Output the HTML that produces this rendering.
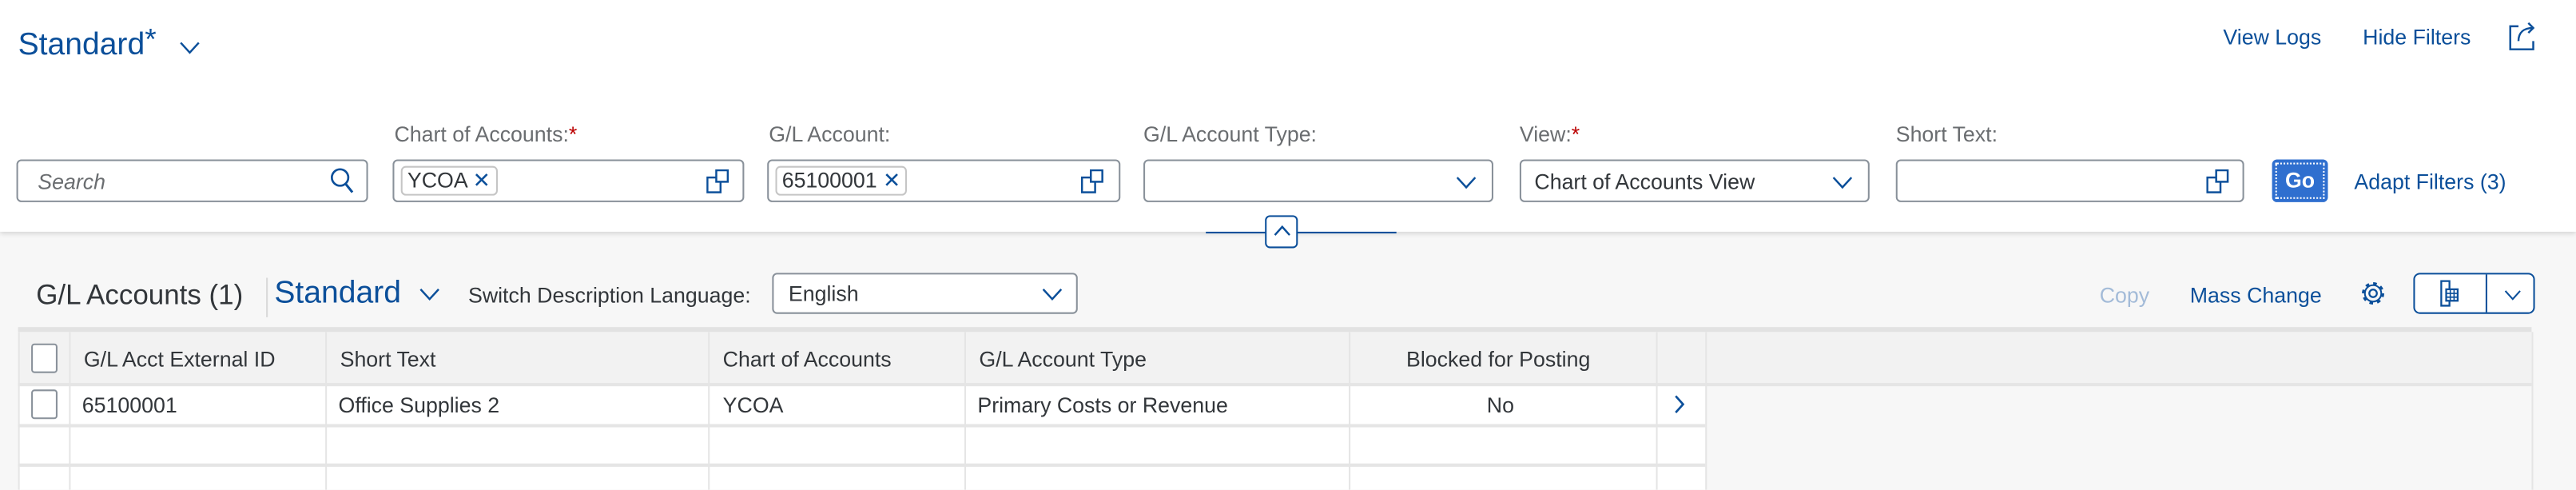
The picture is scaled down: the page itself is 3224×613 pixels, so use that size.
<!DOCTYPE html>
<html><head><meta charset="utf-8"><style>
html,body{margin:0;padding:0;width:3224px;height:612px;overflow:hidden;background:#f7f7f7}
#s{position:absolute;left:0;top:0;width:1568px;height:298px;transform:scale(2.0561);transform-origin:0 0;font-family:"Liberation Sans",sans-serif;color:#32363a;font-size:13px}
.a{position:absolute;white-space:nowrap}
.b{color:#0b4f9a}
.lbl{color:#6a6d70;font-size:13px;top:74px}
.inp{position:absolute;top:97px;height:24px;background:#fff;border:1px solid #89919a;border-radius:3px}
.tok{position:absolute;top:3px;height:18px;border:1px solid #c5c5c5;border-radius:3px;background:#fff;font-size:13px;line-height:16px;padding:0 3px;box-sizing:border-box;white-space:nowrap}
.hdr{position:absolute;top:0;width:1568px;height:141px;background:#fff;box-shadow:0 1px 3px rgba(0,0,0,.15)}
.col{position:absolute;top:0;bottom:0;border-left:1px solid #e5e5e5}
.cell{position:absolute;font-size:13px}
</style></head><body><div id="s">
<div class="hdr"></div>
<div class="a b" style="left:11px;top:14px;font-size:19px">Standard<span style="font-size:18px;vertical-align:3px">*</span></div>
<svg class="a" style="left:109px;top:25px" width="13" height="8"><path d="M1 1l5.5 6 5.5-6" fill="none" stroke="#0b4f9a" stroke-width="1.2"/></svg>
<div class="a b" style="right:155px;top:15px">View Logs</div>
<div class="a b" style="right:64px;top:15px">Hide Filters</div>
<svg class="a" style="left:1527px;top:13px" width="17" height="18"><path d="M6 3H1v14h14v-5" fill="none" stroke="#0b4f9a" stroke-width="1.2"/><path d="M6 12c0-5 3-8 9-8M12 1l3 3-3 3" fill="none" stroke="#0b4f9a" stroke-width="1.2"/></svg>

<div class="a lbl" style="left:240px">Chart of Accounts:<span style="color:#bb0000">*</span></div>
<div class="a lbl" style="left:468px">G/L Account:</div>
<div class="a lbl" style="left:696px">G/L Account Type:</div>
<div class="a lbl" style="left:925px">View:<span style="color:#bb0000">*</span></div>
<div class="a lbl" style="left:1154px">Short Text:</div>

<div class="inp" style="left:10px;width:212px"><span class="a" style="left:12px;top:5px;font-style:italic;color:#6a6d70;font-size:13px">Search</span>
<svg class="a" style="left:190px;top:4px" width="15" height="16"><circle cx="6" cy="6" r="5" fill="none" stroke="#0b4f9a" stroke-width="1.3"/><path d="M9.5 10l4 5" stroke="#0b4f9a" stroke-width="1.5"/></svg></div>
<div class="inp" style="left:239px;width:212px"><div class="tok" style="left:4px">YCOA <span class="b">✕</span></div>
<svg class="a" style="left:190px;top:5px" width="14" height="15"><rect x="0.6" y="5" width="8" height="9" fill="none" stroke="#0b4f9a" stroke-width="1.2"/><rect x="6" y="0.6" width="7" height="7" fill="#fff" stroke="#0b4f9a" stroke-width="1.2"/></svg></div>
<div class="inp" style="left:467px;width:213px"><div class="tok" style="left:4px">65100001 <span class="b">✕</span></div>
<svg class="a" style="left:190px;top:5px" width="14" height="15"><rect x="0.6" y="5" width="8" height="9" fill="none" stroke="#0b4f9a" stroke-width="1.2"/><rect x="6" y="0.6" width="7" height="7" fill="#fff" stroke="#0b4f9a" stroke-width="1.2"/></svg></div>
<div class="inp" style="left:696px;width:211px"><svg class="a" style="left:189px;top:9px" width="13" height="8"><path d="M1 1l5.5 6 5.5-6" fill="none" stroke="#0b4f9a" stroke-width="1.2"/></svg></div>
<div class="inp" style="left:925px;width:211px"><span class="a" style="left:8px;top:5px;font-size:13px">Chart of Accounts View</span><svg class="a" style="left:189px;top:9px" width="13" height="8"><path d="M1 1l5.5 6 5.5-6" fill="none" stroke="#0b4f9a" stroke-width="1.2"/></svg></div>
<div class="inp" style="left:1154px;width:210px"><svg class="a" style="left:188px;top:5px" width="14" height="15"><rect x="0.6" y="5" width="8" height="9" fill="none" stroke="#0b4f9a" stroke-width="1.2"/><rect x="6" y="0.6" width="7" height="7" fill="#fff" stroke="#0b4f9a" stroke-width="1.2"/></svg></div>
<div class="a" style="left:1383px;top:97px;width:34px;height:26px;background:#2f6fcf;border-radius:3px"><div style="position:absolute;left:2px;top:2px;right:2px;bottom:2px;border:1px dotted #fff;color:#fff;font-weight:bold;font-size:13px;text-align:center;line-height:20px">Go</div></div>
<div class="a b" style="left:1433px;top:103px">Adapt Filters (3)</div>

<div class="a" style="left:734px;top:141px;width:116px;height:1px;background:#0b4f9a"></div>
<div class="a" style="left:770px;top:131px;width:20px;height:20px;background:#fff;border:1px solid #0b4f9a;border-radius:3px;box-sizing:border-box"><svg class="a" style="left:4px;top:5px" width="11" height="7"><path d="M1 6l4.5-5 4.5 5" fill="none" stroke="#0b4f9a" stroke-width="1.2"/></svg></div>

<div class="a" style="left:22px;top:170px;font-size:17px">G/L Accounts (1)</div>
<div class="a" style="left:162px;top:169px;width:1px;height:24px;background:#d9d9d9"></div>
<div class="a b" style="left:167px;top:168px;font-size:19px">Standard</div>
<svg class="a" style="left:255px;top:175px" width="13" height="8"><path d="M1 1l5.5 6 5.5-6" fill="none" stroke="#0b4f9a" stroke-width="1.2"/></svg>
<div class="a" style="left:285px;top:172px;font-size:13px">Switch Description Language:</div>
<div class="a" style="left:470px;top:166px;width:184px;height:23px;background:#fff;border:1px solid #89919a;border-radius:3px"><span class="a" style="left:9px;top:4px;font-size:13px">English</span><svg class="a" style="left:163px;top:8px" width="13" height="8"><path d="M1 1l5.5 6 5.5-6" fill="none" stroke="#0b4f9a" stroke-width="1.2"/></svg></div>
<div class="a" style="left:1278px;top:172px;color:#a3bbd8">Copy</div>
<div class="a b" style="left:1333px;top:172px">Mass Change</div>
<svg class="a" style="left:1436px;top:170px" width="17" height="17"><circle cx="8.5" cy="8.5" r="5.5" fill="none" stroke="#0b4f9a" stroke-width="2.6" stroke-dasharray="2 2.3"/><circle cx="8.5" cy="8.5" r="5" fill="#f7f7f7" stroke="#0b4f9a" stroke-width="1"/><circle cx="8.5" cy="8.5" r="2.3" fill="none" stroke="#0b4f9a" stroke-width="1.1"/></svg>
<div class="a" style="left:1469px;top:166px;width:74px;height:25px;border:1px solid #0b4f9a;border-radius:4px;box-sizing:border-box;background:#fff">
<div class="a" style="left:43px;top:0;width:1px;height:23px;background:#0b4f9a"></div>
<svg class="a" style="left:13px;top:3px" width="16" height="17"><path d="M3 1h5v15H3z" fill="none" stroke="#0b4f9a" stroke-width="1.1"/><rect x="6" y="6" width="7" height="7" fill="#fff" stroke="#0b4f9a" stroke-width="1.1"/><path d="M8.5 6v7M10.8 6v7M6 8.5h7M6 10.8h7" stroke="#0b4f9a" stroke-width="0.8"/></svg>
<svg class="a" style="left:54px;top:9px" width="11" height="7"><path d="M1 1l4.5 5 4.5-5" fill="none" stroke="#0b4f9a" stroke-width="1"/></svg></div>

<div class="a" style="left:11px;top:199px;width:1530px;height:3px;background:#e2e2e2"></div>
<div class="a" style="left:11px;top:202px;width:1530px;height:32px;background:#f2f2f2"></div>
<div class="a" style="left:11px;top:234px;width:1027px;height:64px;background:#fff"></div>
<div class="a" style="left:11px;top:233px;width:1530px;height:2px;background:#e5e5e5"></div>
<div class="a" style="left:11px;top:258px;width:1027px;height:2px;background:#e5e5e5"></div>
<div class="a" style="left:11px;top:282px;width:1027px;height:2px;background:#e5e5e5"></div>
<div class="a" style="left:0;top:202px;width:1568px;height:96px">
<div class="col" style="left:11px"></div><div class="col" style="left:42px"></div><div class="col" style="left:198px"></div><div class="col" style="left:431px"></div><div class="col" style="left:587px"></div><div class="col" style="left:821px"></div><div class="col" style="left:1008px"></div><div class="col" style="left:1038px"></div><div class="col" style="left:1541px"></div>
</div>
<div class="a" style="left:19px;top:209px;width:14px;height:16px;border:1px solid #89919a;border-radius:2px;background:#fff"></div>
<div class="a" style="left:19px;top:237px;width:14px;height:16px;border:1px solid #89919a;border-radius:2px;background:#fff"></div>
<div class="cell a" style="left:51px;top:211px">G/L Acct External ID</div>
<div class="cell a" style="left:207px;top:211px">Short Text</div>
<div class="cell a" style="left:440px;top:211px">Chart of Accounts</div>
<div class="cell a" style="left:596px;top:211px">G/L Account Type</div>
<div class="cell a" style="left:856px;top:211px">Blocked for Posting</div>
<div class="cell a" style="left:50px;top:239px">65100001</div>
<div class="cell a" style="left:206px;top:239px">Office Supplies 2</div>
<div class="cell a" style="left:440px;top:239px">YCOA</div>
<div class="cell a" style="left:595px;top:239px">Primary Costs or Revenue</div>
<div class="cell a" style="left:905px;top:239px">No</div>
<svg class="a" style="left:1019px;top:240px" width="7" height="12"><path d="M1 1l4.5 5L1 11" fill="none" stroke="#0b4f9a" stroke-width="1.3"/></svg>
</div></body></html>
